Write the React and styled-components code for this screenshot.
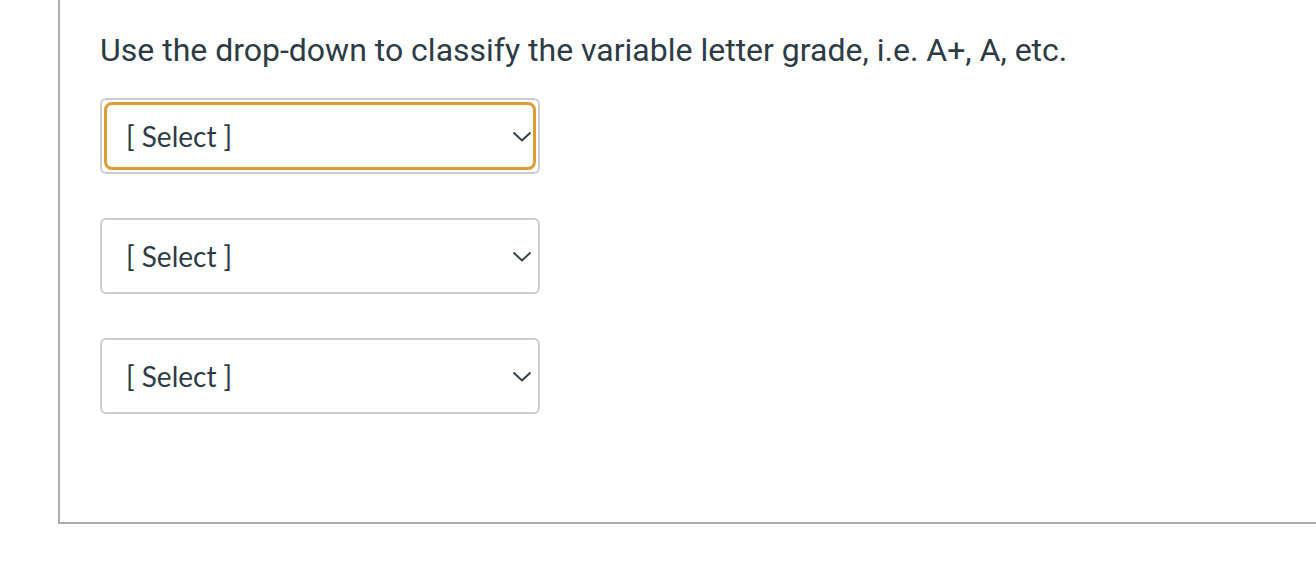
import React from "react";
import styled, { createGlobalStyle } from "styled-components";

const Global = createGlobalStyle`
  html, body { margin: 0; padding: 0; background: #fff; }
  body { font-family: Lato, "Noto Sans", sans-serif; color: #2d3b45; }
`;

const Page = styled.div`
  width: 1316px;
  height: 566px;
  overflow: hidden;
`;

const Panel = styled.section`
  margin-left: 58px;
  height: 524px;
  box-sizing: border-box;
  border-left: 2px solid #aaaaaa;
  border-bottom: 2px solid #aaaaaa;
  padding: 30px 0 0 40px;
  display: flex;
  flex-direction: column;
`;

const Question = styled.p`
  margin: 0 0 28px 0;
  font-family: Roboto, "Liberation Sans", sans-serif;
  font-size: 32px;
  line-height: 40px;
  color: #2d3b45;
`;

const SelectList = styled.div`
  display: flex;
  flex-direction: column;
  gap: 44px;
`;

const SelectBox = styled.div`
  position: relative;
  width: 440px;
  height: 76px;
  box-sizing: border-box;
  border: 2px solid #c7cdd1;
  border-radius: 6px;
  background: #fff;
  display: flex;
  align-items: center;
  padding: 0 0 0 24px;
  ${(p) =>
    p.$focused &&
    `
    &::after {
      content: "";
      position: absolute;
      inset: 2px;
      border: 3px solid #df9b35;
      border-radius: 8px;
      pointer-events: none;
    }
  `}
`;

const SelectLabel = styled.span`
  flex: 1;
  font-family: Lato, "Noto Sans", sans-serif;
  font-size: 28px;
  color: #2d3b45;
`;

const Chevron = styled.svg`
  position: absolute;
  right: 6px;
  top: 50%;
  margin-top: -5px;
  width: 20px;
  height: 11px;
`;

const Select = ({ focused }) => (
  <SelectBox $focused={focused}>
    <SelectLabel>[ Select ]</SelectLabel>
    <Chevron viewBox="0 0 20 11">
      <polyline points="1.5,1.5 10,9.5 18.5,1.5" fill="none" stroke="#2d3b45" strokeWidth="1.8" />
    </Chevron>
  </SelectBox>
);

export default function App() {
  return (
    <Page>
      <Global />
      <Panel>
        <Question>Use the drop-down to classify the variable letter grade, i.e. A+, A, etc.</Question>
        <SelectList>
          <Select focused />
          <Select />
          <Select />
        </SelectList>
      </Panel>
    </Page>
  );
}
